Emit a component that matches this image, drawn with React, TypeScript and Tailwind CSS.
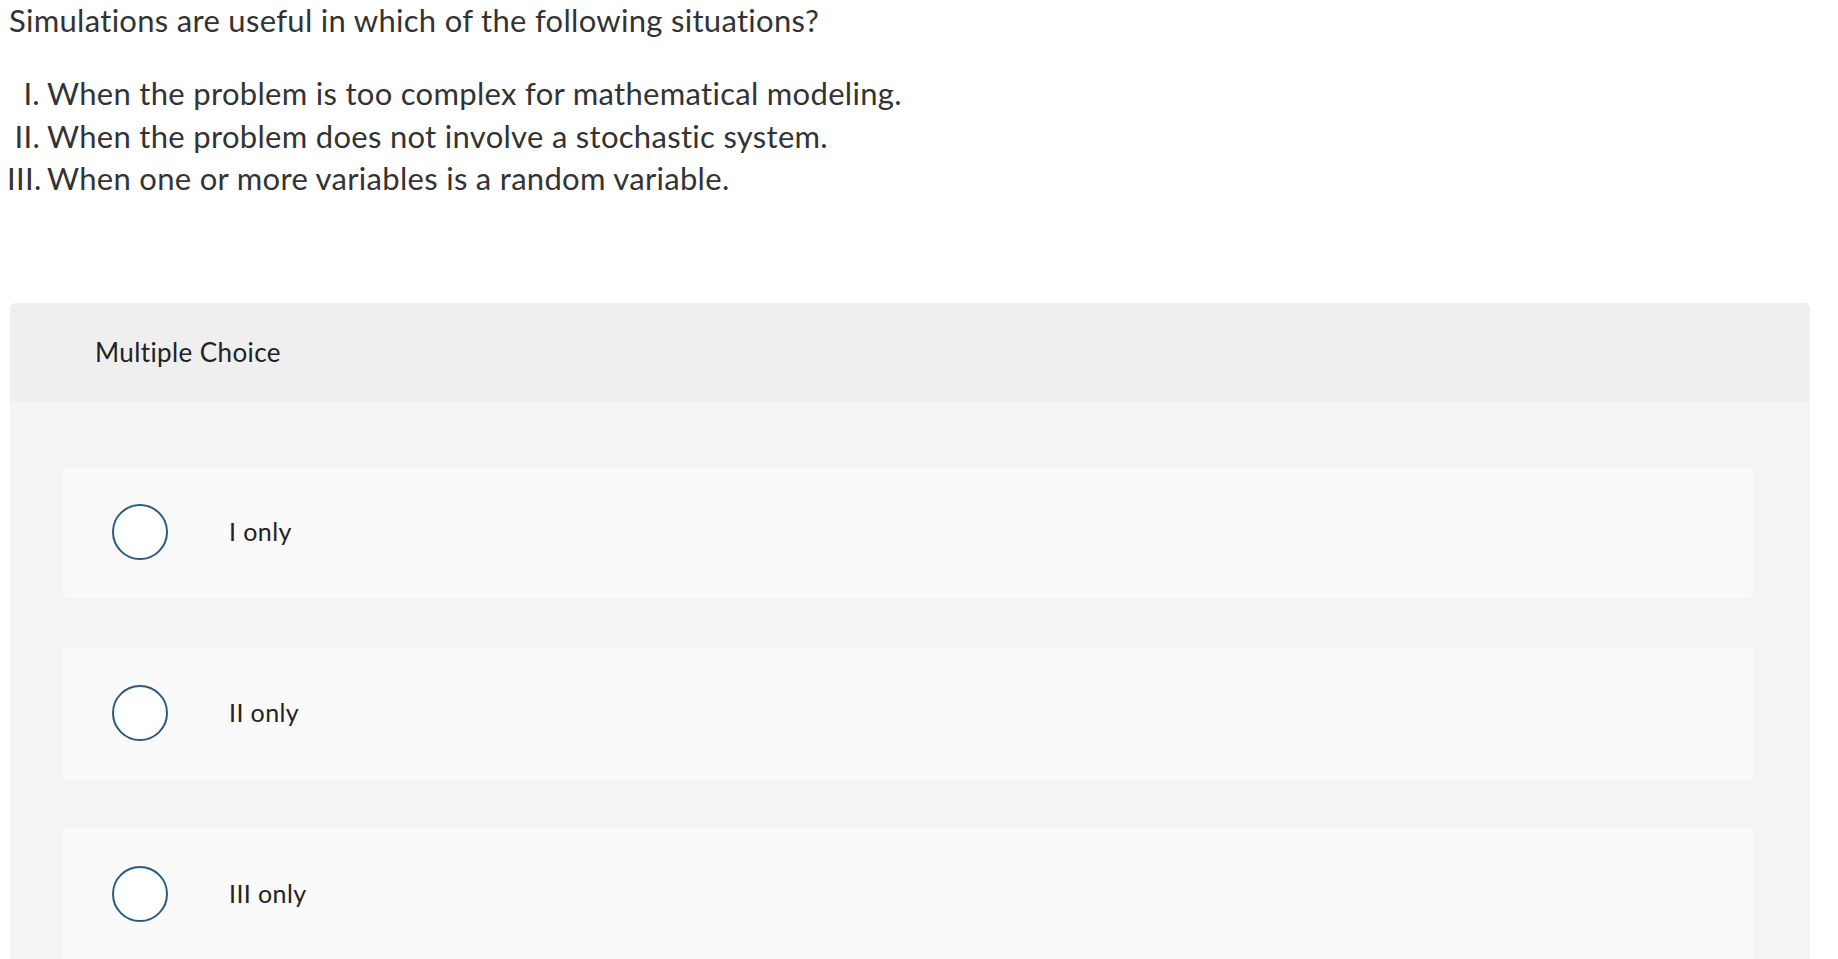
const items = [
  { num: "I.", text: "When the problem is too complex for mathematical modeling." },
  { num: "II.", text: "When the problem does not involve a stochastic system." },
  { num: "III.", text: "When one or more variables is a random variable." },
];

const choices = ["I only", "II only", "III only"];

function Radio() {
  return (
    <span className="block w-[56px] h-[56px] rounded-full border-[2.5px] border-[#2c5a7f] bg-white shrink-0" />
  );
}

export default function App() {
  return (
    <div className="min-h-screen bg-white text-[#333] font-['Lato','Liberation_Sans',sans-serif] overflow-hidden">
      <div className="pl-[10px] pr-[28px]">
        <p className="text-[31px] leading-[40px] tracking-[0.3px] -ml-[1px]">
          Simulations are useful in which of the following situations?
        </p>

        <div className="mt-[32px] -ml-[3px] text-[31px] tracking-[0.3px]">
          {items.map((it) => (
            <div key={it.num} className="flex leading-[42.5px]">
              <span className="w-[33px] text-right shrink-0 whitespace-nowrap">{it.num}</span>
              <span className="pl-[7px]">{it.text}</span>
            </div>
          ))}
        </div>

        <div className="mt-[103px] rounded-md bg-[#f4f4f4] overflow-hidden">
          <div className="h-[100px] bg-[#efefef] flex items-center pl-[85px] border-b border-[#f7f7f7]">
            <span className="text-[26px] tracking-[0.4px] text-[#222]">Multiple Choice</span>
          </div>
          <div className="pt-[64px] pl-[52px] pr-[56px] pb-[50px] flex flex-col gap-[50px]">
            {choices.map((c) => (
              <div
                key={c}
                className="h-[131px] rounded-md bg-[#fafafa] flex items-center pl-[50px]"
              >
                <Radio />
                <span className="ml-[61px] text-[25px] tracking-[0.4px] text-[#222]">{c}</span>
              </div>
            ))}
          </div>
        </div>
      </div>
    </div>
  );
}
